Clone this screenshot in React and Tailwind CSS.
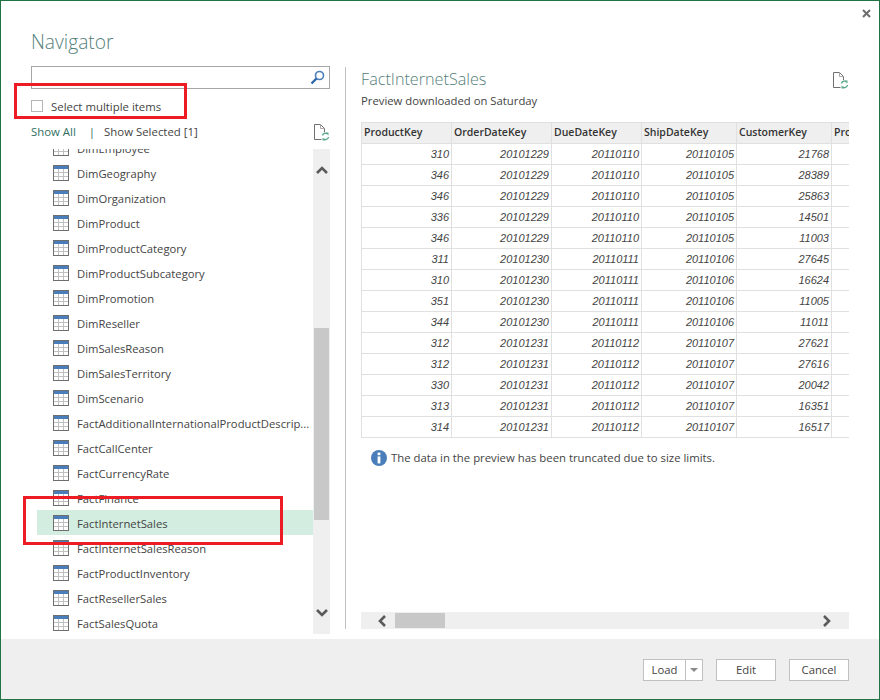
import React from 'react';

const tables = [
  'DimEmployee',
  'DimGeography',
  'DimOrganization',
  'DimProduct',
  'DimProductCategory',
  'DimProductSubcategory',
  'DimPromotion',
  'DimReseller',
  'DimSalesReason',
  'DimSalesTerritory',
  'DimScenario',
  'FactAdditionalInternationalProductDescrip...',
  'FactCallCenter',
  'FactCurrencyRate',
  'FactFinance',
  'FactInternetSales',
  'FactInternetSalesReason',
  'FactProductInventory',
  'FactResellerSales',
  'FactSalesQuota',
];

const columns = [
  ['ProductKey', 'w-[90px]'],
  ['OrderDateKey', 'w-[100px]'],
  ['DueDateKey', 'w-[90px]'],
  ['ShipDateKey', 'w-[95px]'],
  ['CustomerKey', 'w-[95px]'],
  ['ProductSubcategoryKey', 'w-[150px]'],
];

const rows = [
  ['310', '20101229', '20110110', '20110105', '21768'],
  ['346', '20101229', '20110110', '20110105', '28389'],
  ['346', '20101229', '20110110', '20110105', '25863'],
  ['336', '20101229', '20110110', '20110105', '14501'],
  ['346', '20101229', '20110110', '20110105', '11003'],
  ['311', '20101230', '20110111', '20110106', '27645'],
  ['310', '20101230', '20110111', '20110106', '16624'],
  ['351', '20101230', '20110111', '20110106', '11005'],
  ['344', '20101230', '20110111', '20110106', '11011'],
  ['312', '20101231', '20110112', '20110107', '27621'],
  ['312', '20101231', '20110112', '20110107', '27616'],
  ['330', '20101231', '20110112', '20110107', '20042'],
  ['313', '20101231', '20110112', '20110107', '16351'],
  ['314', '20101231', '20110112', '20110107', '16517'],
];

const TableIcon = () => (
  <svg width="16" height="16" viewBox="0 0 16 16" className="shrink-0">
    <rect x="0.5" y="0.5" width="15" height="15" fill="#fff" stroke="#6e6e6e" />
    <rect x="1" y="1" width="14" height="3" fill="#4a7ebb" />
    <path d="M5.5 4v11M10.5 4v11M1 7.5h14M1 11.5h14" stroke="#c0c0c0" fill="none" />
  </svg>
);

const RefreshDocIcon = () => (
  <svg width="17" height="17" viewBox="0 0 17 17">
    <path d="M8.5 15.5H1.5V0.5H7.5L11.5 4.5V8" fill="none" stroke="#707070" />
    <path d="M7.5 0.5V4.5H11.5" fill="none" stroke="#a8a8a8" />
    <path d="M9.5 11.5a3 3 0 0 1 5-1.5M15.5 13a3 3 0 0 1-5 1.8" fill="none" stroke="#5aa88a" strokeWidth="1.4" />
    <path d="M12.5 8.5h3v3zM12.5 16.5h-3v-3z" fill="#5aa88a" />
  </svg>
);

const Chevron = ({ d }) => (
  <svg width="12" height="12" viewBox="0 0 12 12" className="shrink-0">
    <path d={d} fill="none" stroke="#5a5a5a" strokeWidth="2.6" />
  </svg>
);

const Button = ({ children }) => (
  <button className="w-[60px] h-[22px] bg-white border border-[#c0c0c0] text-[11.3px] text-[#444]">
    {children}
  </button>
);

export default function App() {
  return (
    <div className="relative w-[880px] h-[700px] flex flex-col bg-white border border-[#217346] font-['Open_Sans',sans-serif] text-[#444] overflow-hidden">
      <div className="flex justify-end pt-[8px] pr-[8px] h-[26px] shrink-0">
        <svg width="9" height="9" viewBox="0 0 9 9">
          <path d="M1 1l7 7M8 1l-7 7" stroke="#6e6e6e" strokeWidth="2" />
        </svg>
      </div>

      <div className="flex-1 min-h-0 flex">
        <div className="w-[344px] shrink-0 flex flex-col pl-[30px] pr-[15px]">
          <h1 className="h-[39px] text-[19.2px] font-light leading-[30px] text-[#55807a]">Navigator</h1>
          <div className="h-[23px] shrink-0 flex items-center justify-end pr-[4px] border border-[#a6a6a6]">
            <svg width="15" height="15" viewBox="0 0 15 15">
              <circle cx="9.5" cy="5.5" r="4" fill="none" stroke="#4a7ebb" strokeWidth="1.6" />
              <path d="M6.5 8.5L1.5 13.5" stroke="#2f66a8" strokeWidth="2.4" />
            </svg>
          </div>
          <label className="mt-[11px] h-[12px] flex items-center gap-[8px] text-[11.4px]">
            <span className="w-[12px] h-[12px] border border-[#b5b5b5] bg-white" />
            <span className="mt-[2px]">Select multiple items</span>
          </label>
          <div className="mt-[10px] h-[20px] flex items-center text-[11.4px]">
            <span className="text-[#2f6f5f]">Show All</span>
            <span className="ml-[13px] text-[#2f6f5f]">|</span>
            <span className="ml-[9px]">Show Selected [1]</span>
            <span className="ml-auto"><RefreshDocIcon /></span>
          </div>
          <div className="mt-[7px] h-[485px] flex overflow-hidden">
            <ul className="flex-1 min-w-0 mt-[-14px] pl-[6px]">
              {tables.map((name) => (
                <li
                  key={name}
                  className={`h-[25px] flex items-center gap-[8px] pl-[16px] pt-[1px] text-[11.25px] whitespace-nowrap ${name === 'FactInternetSales' ? 'bg-[#d3eee0]' : ''}`}
                >
                  <TableIcon />
                  <span className="mt-[2px]">{name}</span>
                </li>
              ))}
            </ul>
            <div className="relative w-[17px] shrink-0 bg-[#efefef] flex flex-col items-center justify-between pt-[15px] pb-[15px]">
              <Chevron d="M1 9l5-5 5 5" />
              <div className="absolute left-[1px] top-[179px] w-[15px] h-[192px] bg-[#c8c8c8]" />
              <Chevron d="M1 3l5 5 5-5" />
            </div>
          </div>
        </div>

        <div className="w-[505px] shrink-0 h-[562px] mt-[40px] border-l border-[#c0c0c0] pl-[15px] flex flex-col">
          <div className="h-[55px] flex justify-between shrink-0 w-[488px]">
            <div>
              <h2 className="text-[16.2px] font-light leading-[24px] text-[#55807a]">FactInternetSales</h2>
              <p className="mt-[1px] text-[11.3px] leading-[18px]">Preview downloaded on Saturday</p>
            </div>
            <span className="mt-[5px]"><RefreshDocIcon /></span>
          </div>
          <div className="w-[488px] overflow-hidden shrink-0">
            <table className="table-fixed border-collapse w-[620px]">
              <thead>
                <tr className="h-[21px] bg-[#efefef]">
                  {columns.map(([name, width]) => (
                    <th key={name} className={`${width} pl-[2px] border border-[#e0e0e0] text-left text-[10.5px] font-semibold text-[#333] whitespace-nowrap overflow-hidden`}>
                      {name}
                    </th>
                  ))}
                </tr>
              </thead>
              <tbody className="font-['Liberation_Sans',sans-serif] italic text-[11px]">
                {rows.map((row, i) => (
                  <tr key={i} className="h-[21px]">
                    {row.map((v, j) => (
                      <td key={j} className="pr-[2px] border border-[#e0e0e0] text-right">{v}</td>
                    ))}
                    <td className="border border-[#e0e0e0]" />
                  </tr>
                ))}
              </tbody>
            </table>
          </div>
          <div className="mt-[12px] pl-[10px] flex items-center gap-[4px] text-[11.35px]">
            <svg width="16" height="16" viewBox="0 0 16 16">
              <circle cx="8" cy="8" r="8" fill="#4a7ebb" />
              <rect x="6.6" y="2.6" width="2.8" height="2.6" fill="#fff" />
              <rect x="6.6" y="6.4" width="2.8" height="7" fill="#fff" />
            </svg>
            <span className="mt-[-1px]">The data in the preview has been truncated due to size limits.</span>
          </div>
          <div className="mt-auto relative w-[488px] h-[17px] bg-[#efefef] flex items-center justify-between pl-[16px] pr-[17px]">
            <Chevron d="M8 1L3 6l5 5" />
            <div className="absolute left-[34px] top-[1px] w-[50px] h-[15px] bg-[#c8c8c8]" />
            <Chevron d="M4 1l5 5-5 5" />
          </div>
        </div>
      </div>

      <div className="h-[60px] shrink-0 bg-[#efefef] flex items-start justify-end gap-[13px] pt-[20px] pr-[30px]">
        <div className="h-[22px] flex bg-white border border-[#c0c0c0] text-[11.3px]">
          <span className="w-[42px] flex items-center justify-center border-r border-[#c0c0c0]">Load</span>
          <span className="w-[16px] flex items-center justify-center">
            <svg width="8" height="4" viewBox="0 0 8 4"><path d="M0 0h8L4 4z" fill="#8a8a8a" /></svg>
          </span>
        </div>
        <Button>Edit</Button>
        <Button>Cancel</Button>
      </div>

      <div className="absolute left-[13px] top-[82px] w-[173px] h-[36px] border-[3px] border-[#ed1c24]" />
      <div className="absolute left-[22px] top-[495px] w-[260px] h-[49px] border-[3px] border-[#ed1c24]" />
    </div>
  );
}
